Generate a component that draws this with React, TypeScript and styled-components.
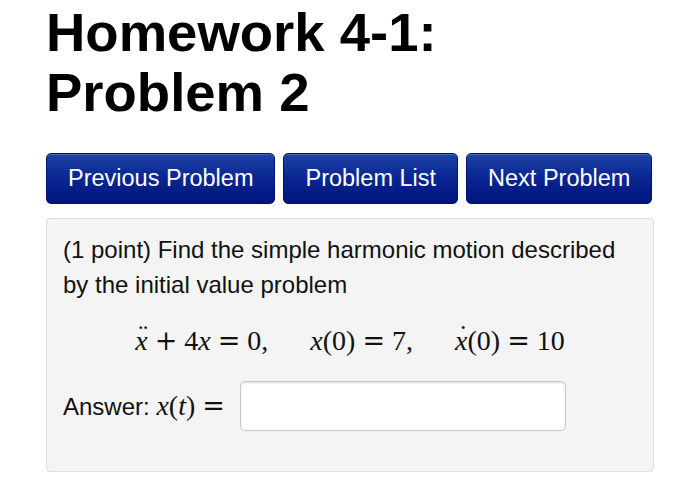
import styled, { createGlobalStyle } from "styled-components";

const GlobalStyle = createGlobalStyle`
  html, body {
    margin: 0;
    padding: 0;
    background: #fff;
  }
  body {
    font-family: "Liberation Sans", Arial, Helvetica, sans-serif;
    color: #111;
  }
`;

export default function App() {
  return (
    <>
      <GlobalStyle />
      <Page>
        <Title>
          Homework 4-1:
          <br />
          Problem 2
        </Title>

        <NavRow>
          <NavButton type="button">Previous Problem</NavButton>
          <NavButton type="button">Problem List</NavButton>
          <NavButton type="button">Next Problem</NavButton>
        </NavRow>

        <ProblemPanel>
          <Statement>
            (1 point) Find the simple harmonic motion described by the initial
            value problem
          </Statement>

          <Equation>
            <Dotted $dots="¨">
              <Var>x</Var>
            </Dotted>
            <Op>+</Op>
            <Num>4</Num>
            <Var>x</Var>
            <Op>=</Op>
            <Num>0,</Num>
            <Spacer />
            <Var>x</Var>
            <Num>(0)</Num>
            <Op>=</Op>
            <Num>7,</Num>
            <Spacer />
            <Dotted $dots="˙">
              <Var>x</Var>
            </Dotted>
            <Num>(0)</Num>
            <Op>=</Op>
            <Num>10</Num>
          </Equation>

          <AnswerRow>
            <AnswerLabel>
              Answer:{" "}
              <InlineMath>
                <Var>x</Var>(<Var>t</Var>)<Op>=</Op>
              </InlineMath>
            </AnswerLabel>
            <AnswerInput type="text" aria-label="answer" />
          </AnswerRow>
        </ProblemPanel>
      </Page>
    </>
  );
}

const Page = styled.main`
  padding: 3px 46px 0;
  width: 608px;
`;

const Title = styled.h1`
  margin: 0 0 30px;
  font-size: 54.5px;
  line-height: 60px;
  font-weight: bold;
  color: #000;
`;

const NavRow = styled.div`
  display: flex;
  gap: 8px;
`;

const NavButton = styled.button`
  height: 51px;
  padding: 0 21px;
  border: 1px solid #00136e;
  border-radius: 5px;
  background: linear-gradient(to bottom, #1d43a4 0%, #0a2894 45%, #00137e 100%);
  box-shadow: inset 0 1px 0 rgba(255, 255, 255, 0.18);
  color: #fff;
  font-family: "Liberation Sans", Arial, Helvetica, sans-serif;
  font-size: 23.5px;
  white-space: nowrap;
  cursor: pointer;
`;

const ProblemPanel = styled.section`
  margin-top: 14px;
  padding: 13px 16px 16px;
  border: 1px solid #dedede;
  border-radius: 4px;
  background: #f4f4f4;
`;

const Statement = styled.p`
  margin: 0;
  font-size: 24px;
  line-height: 35px;
  color: #111;
`;

const Equation = styled.div`
  margin-top: 24px;
  text-align: center;
  font-family: "Liberation Serif", "Times New Roman", serif;
  font-size: 28px;
  line-height: 30px;
  color: #111;
`;

const Var = styled.span`
  font-style: italic;
`;

const Num = styled.span``;

/* relation / binary operators use the wider DejaVu glyphs, TeX-like */
const Op = styled.span`
  margin: 0 7px;
  font-family: "DejaVu Serif", serif;
  font-size: 27px;
`;

const Spacer = styled.span`
  display: inline-block;
  width: 42px;
`;

const Dotted = styled.span<{ $dots: string }>`
  position: relative;
  display: inline-block;

  &::after {
    content: "${(p) => p.$dots}";
    position: absolute;
    left: 0.12em;
    top: -0.2em;
    font-style: normal;
  }
`;

const AnswerRow = styled.div`
  display: flex;
  align-items: center;
  margin-top: 25px;
  margin-bottom: 24px;
`;

const AnswerLabel = styled.span`
  font-size: 24px;
  color: #111;
`;

const InlineMath = styled.span`
  font-family: "Liberation Serif", "Times New Roman", serif;
  font-size: 28px;
`;

const AnswerInput = styled.input`
  width: 326px;
  height: 50px;
  box-sizing: border-box;
  margin-left: 8px;
  border: 1px solid #c9c9c9;
  border-radius: 5px;
  background: #fff;
  box-shadow: inset 0 1px 2px rgba(0, 0, 0, 0.14);
  font-size: 20px;
  outline: none;
`;
